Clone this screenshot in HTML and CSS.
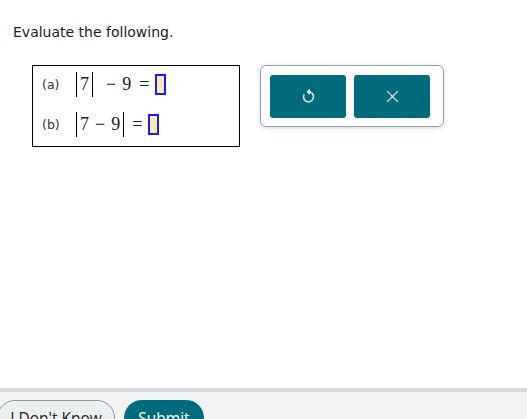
FILE: index.html
```html
<!DOCTYPE html>
<html>
<head>
<meta charset="utf-8">
<link rel="stylesheet" href="styles.css">
</head>
<body>
<div class="page">
  <main class="content">
    <p class="prompt">Evaluate the following.</p>
    <div class="work">
      <div class="problems">
        <div class="row">
          <span class="label">(a)</span>
          <span class="math">
            <span class="abs"><span class="n">7</span></span>
            <span class="op gap-l">−</span>
            <span class="n">9</span>
            <span class="op eq">=</span>
            <span class="answer"></span>
          </span>
        </div>
        <div class="row">
          <span class="label">(b)</span>
          <span class="math">
            <span class="abs"><span class="n">7</span><span class="op">−</span><span class="n">9</span></span>
            <span class="op eq">=</span>
            <span class="answer"></span>
          </span>
        </div>
      </div>
      <div class="palette">
        <button class="tool" aria-label="Undo">
          <svg width="15" height="15" viewBox="0 0 24 24" fill="none" stroke="#fff" stroke-width="2.3" stroke-linecap="round" stroke-linejoin="round">
            <path d="M11 4.5 A8 8 0 1 1 4.6 9.5"/>
            <path d="M13.5 1.6 L10.6 4.5 L13.5 7.4"/>
          </svg>
        </button>
        <button class="tool" aria-label="Clear">
          <svg width="13" height="13" viewBox="0 0 24 24" fill="none" stroke="#fff" stroke-width="2.3" stroke-linecap="round">
            <path d="M3 3 L21 21 M21 3 L3 21"/>
          </svg>
        </button>
      </div>
    </div>
  </main>
  <footer class="footer">
    <button class="btn btn-secondary">I Don't Know</button>
    <button class="btn btn-primary">Submit</button>
  </footer>
</div>
</body>
</html>
```
FILE: styles.css
```css
html, body {
  margin: 0;
  padding: 0;
  height: 100%;
  overflow: hidden;
  background: #fff;
}
.page {
  display: flex;
  flex-direction: column;
  height: 419px;
}
.content {
  flex: 1;
  padding: 0 0 0 13px;
}
.prompt {
  margin: 23px 0 0 0;
  font-family: "DejaVu Sans", Verdana, sans-serif;
  font-size: 14px;
  line-height: 18px;
  color: #222;
}
.work {
  display: flex;
  align-items: flex-start;
  gap: 20px;
  margin: 24px 0 0 19px;
}
.problems {
  width: 208px;
  height: 82px;
  border: 1px solid #000;
  display: flex;
  flex-direction: column;
  padding-top: 8px;
  box-sizing: border-box;
}
.row {
  display: flex;
  align-items: center;
  height: 20px;
  margin-bottom: 20px;
  padding-left: 9px;
}
.label {
  width: 34px;
  font-family: "DejaVu Sans", Verdana, sans-serif;
  font-size: 12.5px;
  color: #333;
}
.math {
  display: flex;
  align-items: center;
  font-family: "Liberation Serif", "Times New Roman", serif;
  font-size: 18px;
  color: #222;
}
.abs {
  display: inline-flex;
  align-items: center;
  border-left: 1px solid #000;
  border-right: 1px solid #000;
  height: 25px;
  padding: 0 3px 0 3px;
}
.n {
  line-height: 20px;
}
.op {
  margin: 0 6px;
  line-height: 20px;
}
.gap-l {
  margin-left: 13px;
}
.eq {
  margin-left: 8px;
  margin-right: 6px;
}
.answer {
  width: 7px;
  height: 17px;
  border: 2px solid #1a1aff;
  background: #fde8b0;
  display: inline-block;
}
.palette {
  width: 184px;
  height: 62px;
  border: 1px solid #95a5ae;
  border-radius: 6px;
  box-shadow: 0 1px 4px rgba(0, 40, 60, 0.2);
  display: flex;
  gap: 8px;
  padding: 9px 0 0 9px;
  box-sizing: border-box;
}
.tool {
  width: 76px;
  height: 43px;
  border: 0;
  border-radius: 3px;
  background: #006b7c;
  display: flex;
  align-items: center;
  justify-content: center;
  padding: 0;
}
.tool svg {
  display: block;
}
.footer {
  height: 31px;
  border-top: 4px solid #d4dbde;
  background: #f2f4f4;
  display: flex;
  align-items: flex-start;
  gap: 9px;
  padding: 8px 0 0 0;
  box-sizing: border-box;
  overflow: hidden;
  flex-shrink: 0;
}
.btn {
  height: 36px;
  border-radius: 18px;
  font-family: "Open Sans", "Noto Sans", sans-serif;
  font-size: 15.5px;
  font-weight: 500;
  padding: 0;
  line-height: 32px;
  box-sizing: border-box;
  flex-shrink: 0;
}
.btn-secondary {
  width: 118px;
  margin-left: -3px;
  border: 1px solid #8c979c;
  background: #eceff0;
  color: #222;
}
.btn-primary {
  width: 80px;
  border: 0;
  background: #006b7c;
  color: #fff;
}
```
